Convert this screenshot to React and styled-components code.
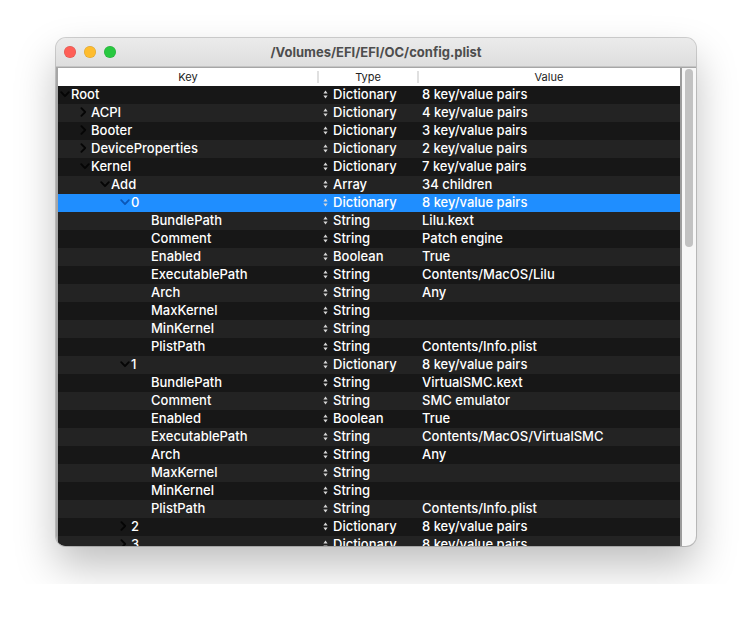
import React from 'react'
import styled, { createGlobalStyle } from 'styled-components'

const GlobalStyle = createGlobalStyle`
    html, body {
        margin: 0;
        padding: 0;
        background: #ffffff;
    }
    body {
        font-family: Inter, "Noto Sans", "Liberation Sans", sans-serif;
        -webkit-font-smoothing: antialiased;
    }
`

const Page = styled.div`
    display: flex;
    padding: 38px 56px;
`

const Window = styled.div`
    width: 640px;
    height: 508px;
    display: flex;
    flex-direction: column;
    border-radius: 10px;
    overflow: hidden;
    background: #ececec;
    box-shadow: 0 0 0 1px rgba(0, 0, 0, 0.18), 0 20px 40px rgba(0, 0, 0, 0.25);
`

const TitleBar = styled.div`
    height: 28px;
    flex-shrink: 0;
    display: flex;
    align-items: center;
    position: relative;
    background: linear-gradient(#ebebeb, #dedede);
    border-bottom: 1px solid #c4c4c4;
`

const Lights = styled.div`
    display: flex;
    gap: 8px;
    padding-left: 8px;
`

const Light = styled.span`
    width: 12px;
    height: 12px;
    border-radius: 50%;
    background: ${p => p.$color};
    box-shadow: inset 0 0 0 0.5px rgba(0, 0, 0, 0.15);
`

const Title = styled.div`
    position: absolute;
    left: 0;
    right: 0;
    text-align: center;
    font-size: 13px;
    font-weight: 700;
    color: #4d4d4d;
    pointer-events: none;
`

const Body = styled.div`
    flex: 1;
    min-height: 0;
    display: flex;
    background: #a6a6a6;
    padding: 1px 0 0 2px;
`

const Table = styled.div`
    flex: 1;
    min-width: 0;
    overflow: hidden;
    background: #181818;
`

const Columns = styled.div`
    display: grid;
    grid-template-columns: 260px 100px 262px;
    height: 18px;
    box-sizing: border-box;
    align-items: center;
`

const HeaderRow = styled(Columns)`
    background: #ffffff;
    font-size: 11px;
    color: #222;
`

const HeaderCell = styled.div`
    height: 100%;
    display: flex;
    align-items: center;
    justify-content: center;
    position: relative;

    &::before {
        content: '';
        display: ${p => (p.$divider ? 'block' : 'none')};
        position: absolute;
        left: -1px;
        top: 3px;
        bottom: 3px;
        width: 2px;
        background: #e0e0e0;
    }
`

const Row = styled(Columns)`
    padding-bottom: 2px;
    background: ${p => (p.$selected ? '#1f8eff' : p.$odd ? '#232323' : '#171717')};
    color: #ffffff;
    font-size: 13px;
    font-weight: 500;
    white-space: nowrap;
`

const KeyCell = styled.div`
    display: flex;
    align-items: center;
    padding-left: ${p => 2 + p.$level * 20}px;
    overflow: hidden;
`

const Disclosure = styled.span`
    width: 11px;
    flex-shrink: 0;
    display: flex;
    align-items: center;
`

const TypeCell = styled.div`
    display: flex;
    align-items: center;
    gap: 5px;
    padding-left: 5px;
`

const ValueCell = styled.div`
    padding-left: 4px;
    overflow: hidden;
`

const ScrollTrack = styled.div`
    width: 14px;
    flex-shrink: 0;
    background: #f7f7f7;
    border-left: 2px solid #9c9c9c;
    display: flex;
    justify-content: center;
    padding-top: 1px;
`

const ScrollThumb = styled.div`
    width: 8px;
    height: 178px;
    border-radius: 4px;
    background: #c2c2c2;
`

const Chevron = ({ open, color }) =>
    open ? (
        <svg width="10" height="7" viewBox="0 0 10 7">
            <path d="M1.2 1.2 L5 5.2 L8.8 1.2" fill="none" stroke={color} strokeWidth="1.8" strokeLinecap="round" strokeLinejoin="round" />
        </svg>
    ) : (
        <svg width="7" height="10" viewBox="0 0 7 10">
            <path d="M1.4 1.2 L5.2 5 L1.4 8.8" fill="none" stroke={color} strokeWidth="1.8" strokeLinecap="round" strokeLinejoin="round" />
        </svg>
    )

const Stepper = () => (
    <svg width="5" height="9" viewBox="0 0 5 9">
        <path d="M2.5 0.5 L4.6 3.6 L0.4 3.6 Z" fill="#d8d8d8" />
        <path d="M2.5 8.5 L4.6 5.4 L0.4 5.4 Z" fill="#d8d8d8" />
    </svg>
)

const leaves = (bundle, comment, exec) => [
    { key: 'BundlePath', level: 4, type: 'String', value: bundle },
    { key: 'Comment', level: 4, type: 'String', value: comment },
    { key: 'Enabled', level: 4, type: 'Boolean', value: 'True' },
    { key: 'ExecutablePath', level: 4, type: 'String', value: exec },
    { key: 'Arch', level: 4, type: 'String', value: 'Any' },
    { key: 'MaxKernel', level: 4, type: 'String', value: '' },
    { key: 'MinKernel', level: 4, type: 'String', value: '' },
    { key: 'PlistPath', level: 4, type: 'String', value: 'Contents/Info.plist' },
]

const rows = [
    { key: 'Root', level: 0, open: true, type: 'Dictionary', value: '8 key/value pairs' },
    { key: 'ACPI', level: 1, open: false, type: 'Dictionary', value: '4 key/value pairs' },
    { key: 'Booter', level: 1, open: false, type: 'Dictionary', value: '3 key/value pairs' },
    { key: 'DeviceProperties', level: 1, open: false, type: 'Dictionary', value: '2 key/value pairs' },
    { key: 'Kernel', level: 1, open: true, type: 'Dictionary', value: '7 key/value pairs' },
    { key: 'Add', level: 2, open: true, type: 'Array', value: '34 children' },
    { key: '0', level: 3, open: true, type: 'Dictionary', value: '8 key/value pairs', selected: true },
    ...leaves('Lilu.kext', 'Patch engine', 'Contents/MacOS/Lilu'),
    { key: '1', level: 3, open: true, type: 'Dictionary', value: '8 key/value pairs' },
    ...leaves('VirtualSMC.kext', 'SMC emulator', 'Contents/MacOS/VirtualSMC'),
    { key: '2', level: 3, open: false, type: 'Dictionary', value: '8 key/value pairs' },
    { key: '3', level: 3, open: false, type: 'Dictionary', value: '8 key/value pairs' },
]

export default function App() {
    return (
        <>
            <GlobalStyle />
            <Page>
                <Window>
                    <TitleBar>
                        <Lights>
                            <Light $color="#fe5f57" />
                            <Light $color="#febc2e" />
                            <Light $color="#28c840" />
                        </Lights>
                        <Title>/Volumes/EFI/EFI/OC/config.plist</Title>
                    </TitleBar>
                    <Body>
                        <Table>
                            <HeaderRow>
                                <HeaderCell>Key</HeaderCell>
                                <HeaderCell $divider>Type</HeaderCell>
                                <HeaderCell $divider>Value</HeaderCell>
                            </HeaderRow>
                            {rows.map((r, i) => (
                                <Row key={i} $odd={i % 2 === 1} $selected={r.selected}>
                                    <KeyCell $level={r.level}>
                                        <Disclosure>
                                            {r.open !== undefined && (
                                                <Chevron open={r.open} color={r.selected ? '#0b57b8' : '#050505'} />
                                            )}
                                        </Disclosure>
                                        {r.key}
                                    </KeyCell>
                                    <TypeCell>
                                        <Stepper />
                                        {r.type}
                                    </TypeCell>
                                    <ValueCell>{r.value}</ValueCell>
                                </Row>
                            ))}
                        </Table>
                        <ScrollTrack>
                            <ScrollThumb />
                        </ScrollTrack>
                    </Body>
                </Window>
            </Page>
        </>
    )
}
